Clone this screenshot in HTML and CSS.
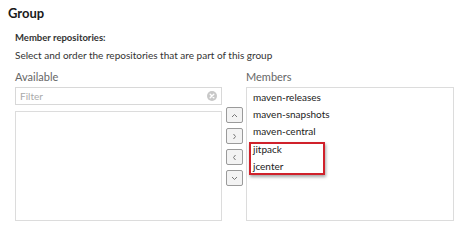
FILE: index.html
```html
<!DOCTYPE html>
<html>
<head>
<meta charset="utf-8">
<link rel="stylesheet" href="styles.css">
</head>
<body>
<div class="page">
  <h2 class="title">Group</h2>
  <div class="section">
    <div class="label-strong">Member repositories:</div>
    <div class="help">Select and order the repositories that are part of this group</div>
    <div class="picker">
      <div class="col col-avail">
        <div class="col-label">Available</div>
        <div class="filter">
          <span class="placeholder">Filter</span>
          <span class="clear">
            <svg width="10" height="10" viewBox="0 0 10 10"><circle cx="5" cy="5" r="5" fill="#c8c8c8"/><path d="M3.2 3.2 L6.8 6.8 M6.8 3.2 L3.2 6.8" stroke="#fff" stroke-width="1.4" stroke-linecap="round"/></svg>
          </span>
        </div>
        <div class="list list-avail"></div>
      </div>
      <div class="buttons">
        <div class="btn"><svg width="7" height="5" viewBox="0 0 7 5"><path d="M1 4 L3.5 1.5 L6 4" fill="none" stroke="#777" stroke-width="1"/></svg></div>
        <div class="btn"><svg width="5" height="7" viewBox="0 0 5 7"><path d="M1.5 1 L3.5 3.5 L1.5 6" fill="none" stroke="#777" stroke-width="1"/></svg></div>
        <div class="btn"><svg width="5" height="7" viewBox="0 0 5 7"><path d="M3.5 1 L1.5 3.5 L3.5 6" fill="none" stroke="#777" stroke-width="1"/></svg></div>
        <div class="btn"><svg width="7" height="5" viewBox="0 0 7 5"><path d="M1 1 L3.5 3.5 L6 1" fill="none" stroke="#777" stroke-width="1"/></svg></div>
      </div>
      <div class="col col-members">
        <div class="col-label">Members</div>
        <div class="list list-members">
          <div class="item">maven-releases</div>
          <div class="item">maven-snapshots</div>
          <div class="item">maven-central</div>
          <div class="item">jitpack</div>
          <div class="item">jcenter</div>
          <div class="highlight"></div>
        </div>
      </div>
    </div>
  </div>
</div>
</body>
</html>
```
FILE: styles.css
```css
* { box-sizing: border-box; }
html, body { margin: 0; padding: 0; background: #fff; }
body { font-family: Lato, "Open Sans", sans-serif; color: #333; width: 474px; height: 237px; overflow: hidden; }
.page { padding: 4px 0 0 8px; }
.title { margin: 0; font-size: 13px; line-height: 18px; font-weight: 700; color: #1a1a1a; }
.section { padding: 10px 0 0 7px; }
.label-strong { font-size: 9.5px; font-weight: 700; line-height: 12px; color: #333; }
.help { font-size: 10px; line-height: 12px; margin-top: 5px; color: #333; }
.picker { display: flex; margin-top: 9px; align-items: flex-start; }
.col-label { font-size: 11px; line-height: 13px; color: #666; height: 17px; }
.col-avail { width: 207px; }
.filter { height: 18px; border: 1px solid #d8d8d8; display: flex; align-items: center; justify-content: space-between; padding: 0 4px 0 4px; }
.placeholder { font-size: 10px; color: #aaa; }
.clear { display: flex; }
.list { border: 1px solid #dcdcdc; background: #fff; }
.list-avail { height: 110px; margin-top: 6px; }
.buttons { display: flex; flex-direction: column; gap: 5px; margin: 37px 0 0 4px; width: 17px; }
.btn { height: 16px; width: 17px; border: 1px solid #9a9a9a; border-radius: 2px; background: #f3f3f3; display: flex; align-items: center; justify-content: center; }
.col-members { width: 208px; margin-left: 3px; }
.list-members { height: 134px; position: relative; padding: 1px 0 0 6px; }
.item { font-size: 10px; line-height: 17.2px; color: #222; }
.highlight { position: absolute; left: 2px; top: 54px; width: 76px; height: 33px; border: 2px solid #d0212b; box-shadow: 1px 2px 3px rgba(0,0,0,0.35); }
```
